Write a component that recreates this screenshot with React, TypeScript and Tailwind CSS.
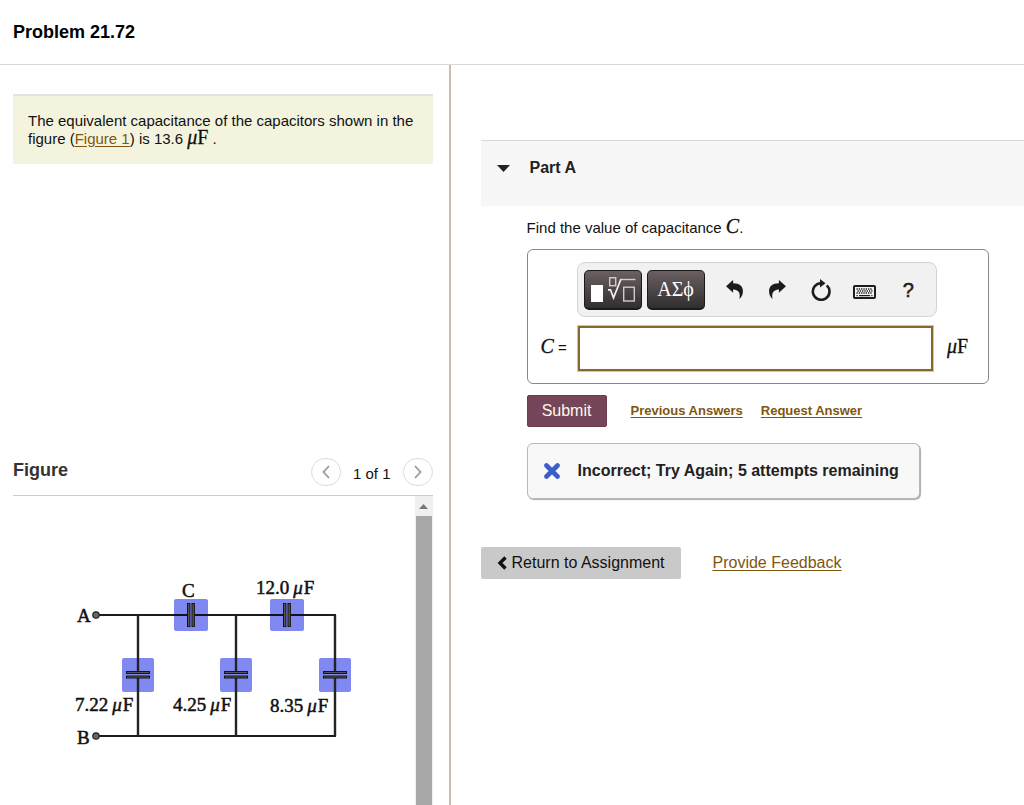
import React from "react";

const link = "text-[#80560f] underline underline-offset-2";
const math = "font-['Liberation_Serif',serif] text-xl leading-0 [-webkit-text-stroke:0.3px]";

function Mu() {
  return (
    <span className={math}>
      <i>μ</i>F
    </span>
  );
}

function MathC() {
  return <i className={math}>C</i>;
}

function UndoArrow({ flip = false }: { flip?: boolean }) {
  return (
    <svg viewBox="0 0 48 54" width="17" height="19" fill="#1c1c1c" aria-hidden="true">
      <path
        transform={flip ? "translate(48 0) scale(-1 1)" : undefined}
        d="M0 18 20 0v9c19 0 28 9 28 23 0 10-4 17-10 22 3-15 0-26-18-27v9Z"
      />
    </svg>
  );
}

function ResetIcon() {
  return (
    <svg viewBox="0 0 20 22" width="20" height="22" aria-hidden="true">
      <path d="M15.800 6.400A8.300 8.300 0 1 1 10 4.200" fill="none" stroke="#1c1c1c" strokeWidth="2.6" />
      <path d="M9 0 14.500 4.300 9 8.500Z" fill="#1c1c1c" />
    </svg>
  );
}

function KeyboardIcon() {
  return (
    <svg viewBox="0 0 23 14" width="23" height="14" aria-hidden="true">
      <rect x="1" y="1" width="21" height="12" rx="1" fill="#f4f4f4" stroke="#1c1c1c" strokeWidth="2" />
      <path
        d="M3.500 4h16M4.500 6h15M3.500 8h16"
        stroke="#1c1c1c"
        strokeWidth="1.4"
        strokeDasharray="1.3 1"
      />
      <path d="M6 10.600h11M3.500 10.600h1.300M18.200 10.600h1.300" stroke="#1c1c1c" strokeWidth="1.4" />
    </svg>
  );
}

function TemplatesIcon() {
  return (
    <svg viewBox="0 0 47 27" width="47" height="27" fill="none" aria-hidden="true">
      <rect x="2" y="9" width="12" height="17" fill="#fff" />
      <g stroke="#d0cccc" strokeWidth="1.4">
        <rect x="20.700" y="1.700" width="6" height="8" />
        <rect x="34.700" y="11.200" width="10.600" height="13.800" />
        <path d="M31.500 3.500H46.500" />
      </g>
      <path d="M19 13.800h2.500l3 8L32 3" stroke="#f4f0f0" strokeWidth="1.7" />
    </svg>
  );
}

function HorizontalPlates({ x }: { x: number }) {
  return (
    <g>
      <rect x={x - 16} y={658} width={32} height={34} rx={2} fill="#8088f2" />
      <path d={`M${x} 615v57M${x} 678v58`} stroke="#242424" strokeWidth="2.4" />
      <g fill="#555" stroke="#151515" strokeWidth="1">
        <rect x={x - 11.5} y={671.5} width={23} height={2} />
        <rect x={x - 11.5} y={676} width={23} height={2} />
      </g>
    </g>
  );
}

function VerticalPlates({ x }: { x: number }) {
  return (
    <g>
      <rect x={x - 17} y={599} width={34} height={32} rx={2} fill="#8088f2" />
      <path d={`M${x - 18} 615h15M${x + 3} 615h15`} stroke="#151515" strokeWidth="2.2" />
      <g fill="#555" stroke="#151515" strokeWidth="1">
        <rect x={x - 3.5} y={603.5} width={2.4} height={23} />
        <rect x={x + 1} y={603.5} width={2.4} height={23} />
      </g>
    </g>
  );
}

function Circuit() {
  return (
    <svg
      viewBox="13 496 400 280"
      width="400"
      height="280"
      className="shrink-0"
      role="img"
      aria-label="Capacitor network between terminals A and B"
    >
      <path d="M96 615h77M209 615h61M303 615h33M96 736h240" stroke="#1c1c1c" strokeWidth="2.2" />
      <VerticalPlates x={191} />
      <VerticalPlates x={287} />
      <HorizontalPlates x={138} />
      <HorizontalPlates x={236} />
      <HorizontalPlates x={335} />
      <g fill="#666" stroke="#222" strokeWidth="1.2">
        <circle cx="96" cy="615" r="3.2" />
        <circle cx="96" cy="736" r="3.2" />
      </g>
      <g
        className="font-['Liberation_Serif',serif] text-[19px]"
        fill="#111"
        stroke="#111"
        strokeWidth="0.5"
      >
        <text x="77" y="622">A</text>
        <text x="77" y="744">B</text>
        <text x="182" y="597">C</text>
        <text x="256" y="594">12.0<tspan dx="4" fontStyle="italic">μ</tspan><tspan dx="1">F</tspan></text>
        <text x="75" y="711">7.22<tspan dx="4" fontStyle="italic">μ</tspan><tspan dx="1">F</tspan></text>
        <text x="173" y="711">4.25<tspan dx="4" fontStyle="italic">μ</tspan><tspan dx="1">F</tspan></text>
        <text x="270" y="712">8.35<tspan dx="4" fontStyle="italic">μ</tspan><tspan dx="1">F</tspan></text>
      </g>
    </svg>
  );
}

function PagerButton({ label, d }: { label: string; d: string }) {
  return (
    <button
      type="button"
      aria-label={label}
      className="flex h-7 w-[30px] items-center justify-center rounded-full border border-[#dcdcdc] bg-white"
    >
      <svg viewBox="0 0 8 14" width="8" height="14" fill="none" stroke="#999" strokeWidth="1.8" aria-hidden="true">
        <path d={d} />
      </svg>
    </button>
  );
}

const darkButton =
  "flex h-10 w-[58px] items-center justify-center rounded-[5px] border border-[#1a1a1a] border-b-2 bg-linear-to-b from-[#6c6062] to-[#312f30] text-white";
const toolButton = "flex h-10 w-11 items-center justify-center text-[#1c1c1c]";

export default function App() {
  return (
    <div className="flex min-h-screen flex-col bg-white font-['Liberation_Sans',Arial,sans-serif] text-[15px] text-[#111]">
      <header className="border-b border-[#d8d8d8] px-[13px] py-5">
        <h1 className="text-lg leading-6 font-bold text-black">Problem 21.72</h1>
      </header>

      <div className="flex flex-1">
        <aside className="flex w-[44%] shrink-0 flex-col border-r-2 border-[#cdbcae] pr-4 pl-[13px]">
          <div className="min-h-[393px] pt-[29px]">
            <p className="border-t-2 border-[#e2e2e2] bg-[#f4f4de] px-[15px] py-4 leading-[18px]">
              The equivalent capacitance of the capacitors shown in the figure (
              <a href="#figure" className={link}>Figure 1</a>) is 13.6 <Mu /> .
            </p>
          </div>

          <section id="figure" className="flex flex-1 flex-col">
            <div className="flex items-start justify-between border-b border-[#ccc] pb-[9px]">
              <h2 className="text-lg leading-6 font-bold text-[#333]">Figure</h2>
              <div className="flex items-center gap-3">
                <PagerButton label="Previous figure" d="M7 1 1.500 7 7 13" />
                <span className="pt-1">1 of 1</span>
                <PagerButton label="Next figure" d="m1 1 5.500 6L1 13" />
              </div>
            </div>
            <div className="flex flex-1 justify-between overflow-hidden">
              <Circuit />
              <div aria-hidden="true" className="flex w-[18px] shrink-0 flex-col bg-[#f0f0f0]">
                <div className="flex h-5 items-center justify-center">
                  <svg viewBox="0 0 9 5" width="9" height="5" fill="#777">
                    <path d="M0 5 4.500 0 9 5Z" />
                  </svg>
                </div>
                <div className="mx-px flex-1 bg-[#a8a8a8]" />
              </div>
            </div>
          </section>
        </aside>

        <main className="min-w-0 flex-1 pt-[75px] pl-[30px]">
          <div className="border-t border-[#d8d8d8] bg-[#f7f7f7] pt-[15px] pb-[26px] pl-4">
            <button type="button" aria-expanded="true" className="flex items-center gap-5">
              <svg viewBox="0 0 13 7" width="13" height="7" fill="#222" aria-hidden="true">
                <path d="M0 0h13L6.500 7Z" />
              </svg>
              <span className="text-base leading-6 font-bold text-[#222]">Part A</span>
            </button>
          </div>

          <div className="pt-3 pr-[35px] pl-[46px]">
            <p className="leading-5">
              Find the value of capacitance <MathC />.
            </p>

            <div className="mt-[11px] rounded-md border border-[#888] pt-3 pb-[11px]">
              <div className="mr-[51px] ml-[49px] flex h-[55px] items-center rounded-lg border border-[#d4d4d4] bg-[#f1f1f1] px-1.5">
                <div className="flex gap-[5px] pr-2">
                  <button type="button" aria-label="Templates" className={darkButton}>
                    <TemplatesIcon />
                  </button>
                  <button
                    type="button"
                    aria-label="Symbols"
                    className={`${darkButton} font-['Liberation_Serif',serif] text-xl`}
                  >
                    ΑΣϕ
                  </button>
                </div>
                <button type="button" aria-label="Undo" className={toolButton}><UndoArrow /></button>
                <button type="button" aria-label="Redo" className={toolButton}><UndoArrow flip /></button>
                <button type="button" aria-label="Reset" className={toolButton}><ResetIcon /></button>
                <button type="button" aria-label="Keyboard shortcuts" className={`${toolButton} pt-1`}><KeyboardIcon /></button>
                <button type="button" aria-label="Help" className={`${toolButton} text-xl [-webkit-text-stroke:0.5px]`}>?</button>
              </div>
              <div className="mt-2 flex items-center">
                <label htmlFor="answer" className="w-[49px] pl-[13px] whitespace-nowrap">
                  <MathC /> =
                </label>
                <input
                  id="answer"
                  type="text"
                  className="h-[47px] min-w-0 flex-1 border-3 border-[#86692a] bg-white px-2 outline-1 -outline-offset-1 outline-[#dcc98a]"
                />
                <span className="w-[54px] pl-[13px]"><Mu /></span>
              </div>
            </div>

            <div className="mt-[11px] flex items-center text-[13px] font-bold">
              <button
                type="button"
                className="mr-6 h-8 w-20 rounded-xs border border-[#6a3c4c] bg-[#75465a] text-base font-normal text-[#fff8e8]"
              >
                Submit
              </button>
              <a href="#previous" className={`${link} mr-[18px]`}>Previous Answers</a>
              <a href="#request" className={link}>Request Answer</a>
            </div>

            <div className="mt-4 flex h-14 w-fit items-center gap-[18px] rounded-md border border-[#b8b8b8] bg-[#f8f8f8] pr-5 pl-4 text-base font-bold text-[#222] shadow-[1px_1px_1px_#aaa]">
              <svg viewBox="0 0 16 16" width="16" height="16" aria-hidden="true">
                <path d="m2.500 2.500 11 11M13.500 2.500l-11 11" stroke="#3a5fcd" strokeWidth="4.6" strokeLinecap="round" />
              </svg>
              <span>Incorrect; Try Again; 5 attempts remaining</span>
            </div>
          </div>

          <div className="mt-12 flex items-center gap-8 text-base">
            <button
              type="button"
              className="flex h-8 items-center gap-[5px] rounded-xs bg-[#c9c9c9] px-4"
            >
              <svg viewBox="0 0 10 14" width="10" height="14" fill="none" stroke="#111" strokeWidth="3.4" aria-hidden="true">
                <path d="M8.500 1.500 3 7l5.500 5.500" />
              </svg>
              Return to Assignment
            </button>
            <a href="#feedback" className={link}>Provide Feedback</a>
          </div>
        </main>
      </div>
    </div>
  );
}
